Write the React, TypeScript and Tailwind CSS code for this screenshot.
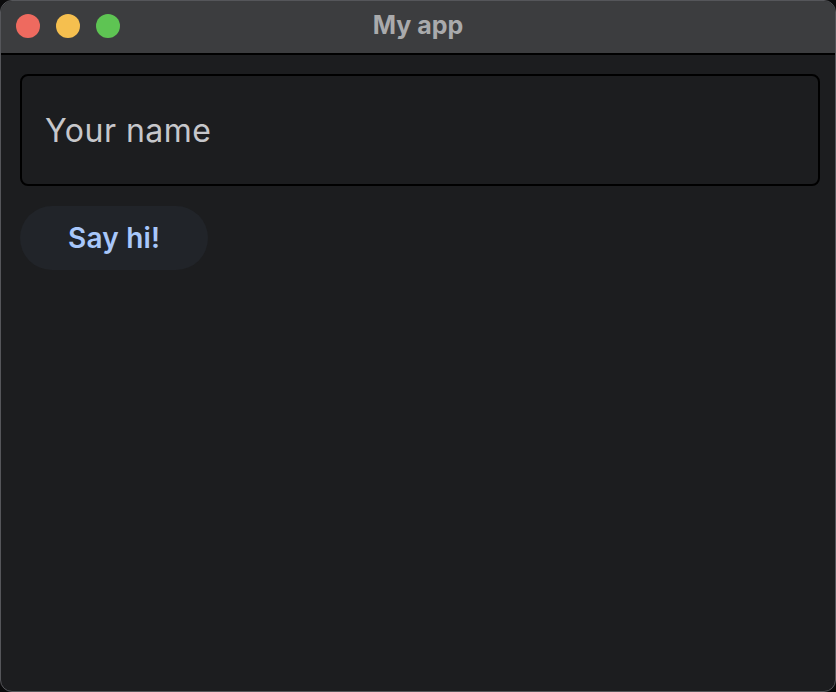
import React, { useState } from 'react';

// macOS-style window chrome with a Compose-like form inside
export default function App() {
  const [name, setName] = useState('');

  return (
    <div className="w-[836px] h-[692px] bg-[#0b0b0c]">
      <div className="w-full h-full flex flex-col rounded-[12px] overflow-hidden border border-[#55565a] bg-[#1c1d1f]">
        {/* Title bar */}
        <div className="relative h-[54px] shrink-0 flex items-center pb-[2px] bg-[#3c3d3f] border-b-2 border-black">
          <div className="flex items-center gap-[16px] pl-[15px]">
            <span className="w-[24px] h-[24px] rounded-full bg-[#ee6a5f]" />
            <span className="w-[24px] h-[24px] rounded-full bg-[#f5bf4f]" />
            <span className="w-[24px] h-[24px] rounded-full bg-[#5ec453]" />
          </div>
          <div
            className="absolute inset-0 pb-[3px] flex items-center justify-center text-[25px] font-bold text-[#a9aaac]"
            style={{ fontFamily: 'Inter, "Noto Sans", sans-serif' }}
          >
            My app
          </div>
        </div>

        {/* Content */}
        <div
          className="flex flex-col items-start gap-[20px] pl-[19px] pr-[15px] pt-[19px]"
          style={{ fontFamily: 'Inter, "Noto Sans", sans-serif' }}
        >
          <input
            type="text"
            value={name}
            onChange={(e) => setName(e.target.value)}
            placeholder="Your name"
            className="w-full h-[112px] rounded-[8px] border-2 border-black bg-[#1c1d1f] px-[23px] text-[32px] tracking-[0.5px] text-[#c6c7cb] placeholder-[#c6c7cb] outline-none"
          />
          <button className="h-[64px] px-[48px] rounded-full bg-[#212429] text-[28px] font-semibold tracking-[0.2px] text-[#a8c7fa]">
            Say hi!
          </button>
        </div>
      </div>
    </div>
  );
}
